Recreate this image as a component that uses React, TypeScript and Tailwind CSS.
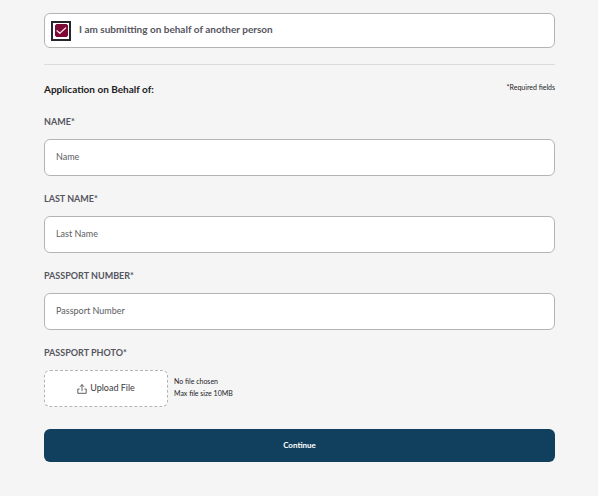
import { useRef, useState } from 'react'

interface TextFieldProps {
    id: string
    label: string
    placeholder: string
}

function TextField({ id, label, placeholder }: TextFieldProps) {
    return (
        <div className="mb-[15px]">
            <label htmlFor={id} className="mb-[9px] block text-[9px] leading-4 font-bold text-[#55555f] uppercase">
                {label}*
            </label>
            <input
                id={id}
                type="text"
                required
                placeholder={placeholder}
                className="block h-[37px] w-full rounded-md border border-[#b4b4b4] bg-white px-[11px] pb-[3px] text-[9px] text-[#333] outline-none placeholder:text-[#5c5c62] focus:border-[#10405e]"
            />
        </div>
    )
}

export default function App() {
    const [onBehalf, setOnBehalf] = useState(true)
    const [fileName, setFileName] = useState('')
    const fileInput = useRef<HTMLInputElement>(null)

    return (
        <div className="min-h-screen bg-white pr-0.5 font-[Lato,sans-serif]">
            <form
                className="min-h-screen bg-[#f5f5f5] pt-[13px] pr-[43px] pb-[34px] pl-11"
                onSubmit={(e) => e.preventDefault()}
            >
                {/* Submitting for someone else */}
                <label className="flex h-[35px] items-center gap-2 rounded-md border border-[#b4b4b4] bg-white px-[6px]">
                    <span className="grid size-5 place-items-center border-2 border-[#26262c] bg-white">
                        <input
                            type="checkbox"
                            checked={onBehalf}
                            onChange={(e) => setOnBehalf(e.target.checked)}
                            className="peer col-start-1 row-start-1 size-[13px] appearance-none rounded-[2px] border border-[#7d0a34] outline-none checked:bg-[#7d0a34]"
                        />
                        <svg
                            className="pointer-events-none invisible col-start-1 row-start-1 size-[13px] peer-checked:visible"
                            fill="none"
                            stroke="#f7dfe8"
                            viewBox="0 0 13 13"
                        >
                            <path strokeLinecap="round" strokeLinejoin="round" strokeWidth={1.3} d="M2 6.8l2.8 2.4 5.8-5.2" />
                        </svg>
                    </span>
                    <span className="pb-[4px] text-[10px] leading-4 font-bold text-[#55555f]">
                        I am submitting on behalf of another person
                    </span>
                </label>

                <hr className="mt-4 border-[#dcdcdc]" />

                <div className="mt-4 mb-[17px] flex items-start justify-between">
                    <h2 className="text-[10px] leading-4 font-bold text-[#1c1c1f]">Application on Behalf of:</h2>
                    <p className="text-[7px] leading-3 text-[#1c1c1f]">*Required fields</p>
                </div>

                <TextField id="name" label="Name" placeholder="Name" />
                <TextField id="last-name" label="Last Name" placeholder="Last Name" />
                <TextField id="passport-number" label="Passport Number" placeholder="Passport Number" />

                {/* Passport photo */}
                <label htmlFor="passport-photo" className="mb-[9px] block text-[9px] leading-4 font-bold text-[#55555f] uppercase">
                    Passport Photo*
                </label>
                <div className="flex items-center gap-[6px]">
                    <input
                        ref={fileInput}
                        id="passport-photo"
                        type="file"
                        className="hidden"
                        onChange={(e) => setFileName(e.target.files?.[0]?.name ?? '')}
                    />
                    <button
                        type="button"
                        onClick={() => fileInput.current?.click()}
                        className="flex h-[37px] w-[124px] items-center justify-center gap-[3px] rounded-md border border-dashed border-[#b4b4b4] bg-white pb-[2px] text-[9px] text-[#3a3a40]"
                    >
                        <svg className="mt-[3px] size-[10px]" fill="none" stroke="currentColor" viewBox="0 0 10 10">
                            <path
                                strokeLinecap="round"
                                strokeLinejoin="round"
                                strokeWidth={0.8}
                                d="M5 6.8V.8M3.1 2.6L5 .7l1.9 1.9M2.2 5H.8v4.3h8.4V5H7.8"
                            />
                        </svg>
                        Upload File
                    </button>
                    <div className="pb-[3px] text-[7px] leading-3 text-[#1c1c1f]">
                        <p>{fileName || 'No file chosen'}</p>
                        <p>Max file size 10MB</p>
                    </div>
                </div>

                <button
                    type="submit"
                    className="mt-[22px] block h-[33px] w-full rounded-md bg-[#10405e] pb-[1px] text-[8px] font-bold text-white"
                >
                    Continue
                </button>
            </form>
        </div>
    )
}
